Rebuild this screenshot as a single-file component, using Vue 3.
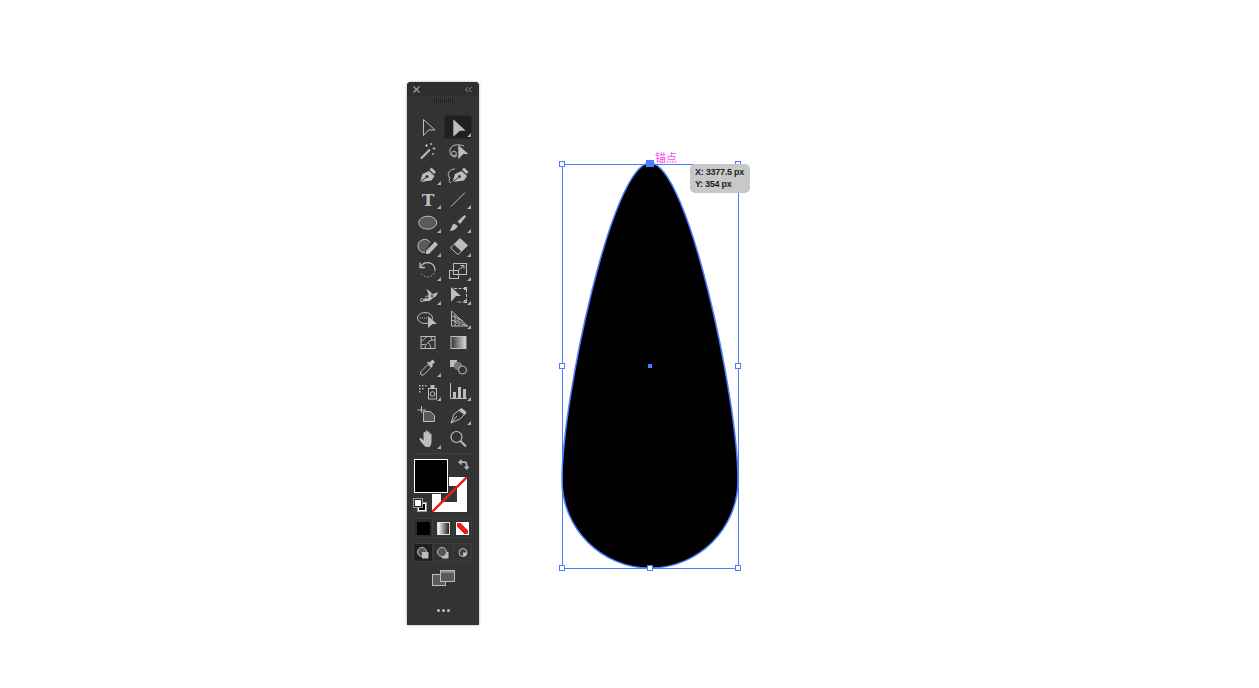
<template>
  <div class="page">
    <!-- tool panel -->
    <div class="panel">
      <div class="panel-head">
        <svg class="head-icon" width="7" height="7" viewBox="0 0 7 7"><path d="M.5 .5l6 6M6.500 .5l-6 6" stroke="#a0a0a0" stroke-width="1.200" /></svg>
        <svg class="head-icon" width="7" height="5" viewBox="0 0 7 5"><path d="M3 0L.5 2.500 3 5M6.500 0L4 2.500 6.500 5" stroke="#8f8f8f" fill="none" /></svg>
      </div>
      <div class="grip"></div>
      <div class="tools">
        <div
          v-for="tool in tools"
          :key="tool.name"
          class="tool"
          :class="{ active: tool.active, more: tool.more }"
          :title="tool.name"
        >
          <svg width="30" height="24" viewBox="0 0 30 24" fill="none" stroke="#bdbdbd" stroke-width="1" v-html="tool.icon"></svg>
        </div>
      </div>

      <div class="divider"></div>

      <!-- fill and stroke -->
      <div class="colors">
        <div class="stroke-swatch">
          <div class="stroke-hole"></div>
          <svg class="slash" width="35" height="35" viewBox="0 0 35 35"><path d="M0 35L35 0" stroke="#f01a1a" stroke-width="2.500" /></svg>
        </div>
        <div class="fill-swatch"></div>
        <svg class="swap" width="11" height="11" viewBox="0 0 14 14" fill="none" stroke="#b5b5b5" stroke-width="2">
          <path d="M2 4h6a3 3 0 0 1 3 3v5" />
          <path d="M4.500 1L1.500 4l3 3" />
          <path d="M8.500 9.500l2.500 3 2.500-3" />
        </svg>
        <div class="mini">
          <div class="mini-stroke"></div>
          <div class="mini-fill"></div>
        </div>
      </div>

      <div class="seg modes">
        <div class="seg-item first"><span class="mode black"></span></div>
        <div class="seg-item"><span class="mode gradient"></span></div>
        <div class="seg-item"><span class="mode none"></span></div>
      </div>

      <div class="seg draw-modes">
        <div class="seg-item current">
          <svg width="14" height="14" viewBox="0 0 14 14"><circle cx="6" cy="6" r="4.500" fill="#555" stroke="#bdbdbd" /><rect x="6" y="6" width="6.500" height="6.500" fill="#bdbdbd" /></svg>
        </div>
        <div class="seg-item">
          <svg width="14" height="14" viewBox="0 0 14 14"><rect x="6" y="6" width="6.500" height="6.500" fill="#bdbdbd" /><circle cx="6" cy="6" r="4.500" fill="#555" stroke="#bdbdbd" /></svg>
        </div>
        <div class="seg-item">
          <svg width="14" height="14" viewBox="0 0 14 14"><circle cx="7" cy="6.500" r="4" fill="#444" stroke="#bdbdbd" /><path d="M7 6.500h4a4 4 0 0 1-4 4z" fill="#bdbdbd" /></svg>
        </div>
      </div>

      <svg class="screen" width="23" height="17" viewBox="0 0 23 17">
        <rect x=".5" y="4.500" width="13" height="11" fill="#5a5a5a" stroke="#bdbdbd" />
        <rect x="8.500" y=".5" width="14" height="11" fill="#5a5a5a" stroke="#bdbdbd" />
        <path d="M9 2h13" stroke="#bdbdbd" />
      </svg>

      <div class="dots"><span></span><span></span><span></span></div>
    </div>

    <!-- artwork on the canvas -->
    <svg class="art" width="1259" height="688" viewBox="0 0 1259 688">
      <path
        d="M650 163C612 163 562 400 562 480C562 528.600 601.400 568 650 568C698.600 568 738 528.600 738 480C738 400 688 163 650 163Z"
        fill="#000"
        stroke="#4a7dff"
        stroke-width="1.500"
      />
      <rect x="562.500" y="164.500" width="176" height="404" fill="none" stroke="#4a7dff" />
      <rect
        v-for="h in handles"
        :key="h.x + '-' + h.y"
        :x="h.x - 2.5"
        :y="h.y - 2.5"
        width="5"
        height="5"
        fill="#fff"
        stroke="#4a7dff"
      />
      <rect x="646" y="160" width="8" height="7" fill="#4a7dff" />
      <rect x="648" y="364" width="4" height="4" fill="#4a7dff" />
    </svg>

    <span class="anchor-label">锚点</span>
    <div class="coords">
      <div>X: 3377.5 px</div>
      <div>Y: 354 px</div>
    </div>
  </div>
</template>

<script setup>
// handles of the bounding box
const handles = [
  { x: 562, y: 164 },
  { x: 738, y: 164 },
  { x: 562, y: 366 },
  { x: 738, y: 366 },
  { x: 562, y: 568 },
  { x: 650, y: 568 },
  { x: 738, y: 568 }
]

const solid = 'fill="#bdbdbd" stroke="none"'

const tools = [
  { name: 'direct', icon: '<path d="M10.500 4.500L22 15h-6.500l-5 5.500z"/>' },
  { name: 'select', active: true, more: true, icon: `<path d="M10.300 4.300L22.700 15.700H17L10.300 21.700z" ${solid}/>` },
  { name: 'wand', icon: `<path d="M8 19.500L17 10.500" stroke-width="2"/><path d="M13.500 5v3M12 6.500h3M21 8v3M19.500 9.500h3M18 4v2M17 5h2M20 14v2M19 15h2" stroke-width=".9"/>` },
  { name: 'lasso', icon: `<path d="M12 18C8 18 6.500 14 7 11 8 6 14 4.500 21 7"/><circle cx="11" cy="14.500" r="2.300"/><path d="M13 15.500c1 1 1 2-1 2.500"/><path d="M15.300 6L25.300 15h-5l-5 5.300z" ${solid}/>` },
  { name: 'pen', more: true, icon: `<path d="M7 19L9.500 11 16 8l5.500 5-3 4.500z" ${solid}/><path d="M16.500 6.500L18.500 4.500 23 9 21 11z" ${solid}/><path d="M7 19l6-4.500" stroke="#333"/><circle cx="14" cy="13.500" r="1.500" fill="#333" stroke="none"/>` },
  { name: 'curvature', icon: `<path d="M9.500 19L12 11 18.500 8l5.500 5-3 4.500z" ${solid}/><path d="M19 6.500L21 4.500 25.500 9 23.500 11z" ${solid}/><path d="M9.500 19l6-4.500" stroke="#333"/><circle cx="16.500" cy="13.500" r="1.500" fill="#333" stroke="none"/><path d="M12 6C6 6 4 11 6 14 8 17 4 18 8 20"/>` },
  { name: 'type', more: true, icon: '<text x="15" y="18.500" text-anchor="middle" font-family="DejaVu Serif, serif" font-size="17" font-weight="700" fill="#bdbdbd" stroke="none">T</text>' },
  { name: 'line', more: true, icon: '<path d="M8 19.500L22 5.500"/>' },
  { name: 'ellipse', more: true, icon: '<ellipse cx="14.700" cy="11.700" rx="9" ry="6.500" fill="#5a5a5a"/>' },
  { name: 'brush', more: true, icon: `<path d="M14.500 10.500L21.500 4l1.500 1.500-6 7.500z" ${solid}/><path d="M7 20c1-1 1-5 4-7.500l4 2.500c-1.500 3-5 5-8 5z" ${solid}/>` },
  { name: 'shaper', more: true, icon: `<path d="M12 17.500a6.500 6.500 0 1 1 5-10" fill="#5a5a5a"/><path d="M13 19l0-3L22 6.500l3 3L16 19z" ${solid}/>` },
  { name: 'eraser', more: true, icon: `<path d="M7.500 13L17 3.500l7.500 7L15 19.500z"/><path d="M11 9.500L17 3.500l7.500 7-6 6z" ${solid}/>` },
  { name: 'rotate', more: true, icon: `<path d="M8 7.500A7.500 7.500 0 0 1 22 11" stroke-width="1.300"/><path d="M22 11a7.500 7.500 0 0 1-14.500 2" stroke-dasharray="1.500 1.800"/><path d="M7 3.500v5h5" stroke-width="1.300"/>` },
  { name: 'scale', more: true, icon: `<rect x="10.500" y="4.500" width="13" height="11"/><rect x="6.500" y="11.500" width="9" height="8"/><path d="M15.500 11L21 6.500M17.500 6.500H21V10"/>` },
  { name: 'warp', more: true, icon: `<path d="M7 19c2-3 6-3 8-6 1-2 0-4-2-7 3 1 5 3 6 5 2 0 4-1 6-2-1 3-2 5-5 6-2 1-2 3-5 3-2 0-4 0-8 1z" ${solid}/><circle cx="9" cy="17" r="1.500" stroke-width=".8" fill="#333"/><circle cx="14" cy="14.500" r="1.500" stroke-width=".8" fill="#333"/><circle cx="19" cy="13" r="1.500" stroke-width=".8" fill="#333"/>` },
  { name: 'free transform', more: true, icon: `<path d="M8 4l10 9h-5l-5 6z" ${solid}/><path d="M11 5.500h12.500V19H13" stroke-dasharray="3 1.500"/><rect x="21.500" y="4.500" width="2" height="2"/><rect x="21.500" y="17.500" width="2" height="2"/>` },
  { name: 'shape builder', icon: `<ellipse cx="12" cy="11" rx="7.500" ry="5.500"/><path d="M7 11h9" stroke-dasharray="1 1"/><path d="M15 9l9 8h-4.500L15 21z" ${solid}/>` },
  { name: 'perspective grid', more: true, icon: `<path d="M8.500 4v15h16M8.500 4l16 15M8.500 8.500l11 5M8.500 13l16 6M12 7.500V19M16 11.500V19"/><path d="M13 12l6 3 2 2H13z" fill="#777" stroke="none"/>` },
  { name: 'mesh', icon: '<rect x="8" y="5.500" width="14" height="12"/><path d="M8 10c4-1 4-4 7-5M12 17.500c0-4 2-4 3-6s4-2 7-3M8 14c3-1 4 0 5-1M15 11.500c2 1 2 3 3 6M18 5.500c0 2 1 3 1 4"/>' },
  { name: 'gradient', icon: '<rect x="8" y="5.500" width="15" height="12" fill="url(#tool-grad)"/><defs><linearGradient id="tool-grad"><stop offset="0" stop-color="#333"/><stop offset="1" stop-color="#ddd"/></linearGradient></defs>' },
  { name: 'eyedropper', more: true, icon: `<path d="M8 20l-.5-3L15 9.500l3 3L10.500 20z"/><path d="M14 7.500l1.500-1 1 1 3-3 2.500 2.500-3 3 1 1-1.500 1.500z" ${solid}/>` },
  { name: 'blend', icon: `<rect x="7" y="5" width="7" height="7" ${solid}/><circle cx="15" cy="11" r="4" fill="#777" stroke="none"/><circle cx="19.500" cy="15" r="4" fill="#333"/>` },
  { name: 'symbol sprayer', more: true, icon: `<path d="M6 6h1.500v1.500H6zM9 6h1.500v1.500H9zM12 6h1.500v1.500H12zM6 9h1.500v1.500H6zM9 9h1.500v1.500H9zM6 12h1.500v1.500H6z" ${solid}/><rect x="15.500" y="9.500" width="8" height="10.500"/><rect x="17.500" y="6" width="4" height="3.500" fill="#bdbdbd" stroke="none"/><circle cx="19.500" cy="15" r="2.300"/>` },
  { name: 'graph', more: true, icon: `<path d="M7.500 4v15.500H24"/><path d="M10 13h3v6h-3zM15 8h3v11h-3zM20 10h3v9h-3z" ${solid}/>` },
  { name: 'artboard', icon: `<path d="M8.500 3v7M4.500 7h8.500"/><path d="M10.500 8.500h7l4 4v6h-11z" fill="#5a5a5a"/>` },
  { name: 'slice', more: true, icon: `<path d="M8 20l3-9 7-5 5 4-6 6z"/><path d="M15.500 7.500l3-2.500 5 4-2 3z" ${solid}/><path d="M8 20l6-7"/>` },
  { name: 'hand', more: true, icon: `<path d="M13 20c-2-1-5-5-6.500-7.500-.5-1.500 1-2 2-1l2 2V6c0-1.500 2-1.500 2 0v3-4.500c0-1.500 2-1.500 2 0V9 5.500c0-1.500 2-1.500 2 0V10 7.500c0-1.500 2-1.500 2 0V15c0 2-1 4-2 5z" ${solid}/>` },
  { name: 'zoom', icon: '<circle cx="13.500" cy="10" r="5.500" stroke-width="1.200"/><path d="M17.500 14l5.500 5.500" stroke-width="2"/>' }
]
</script>

<style>
html,
body {
  margin: 0;
  background: #fff;
}
</style>

<style scoped>
.page {
  position: relative;
  width: 1259px;
  height: 688px;
  overflow: hidden;
  background: #fff;
  font-family: "Liberation Sans", Arial, sans-serif;
}
.panel {
  position: absolute;
  left: 407px;
  top: 82px;
  width: 72px;
  height: 543px;
  box-sizing: border-box;
  display: flex;
  flex-direction: column;
  align-items: center;
  background: #333;
  border-radius: 4px 4px 0 0;
  box-shadow: 0 0 3px rgba(0, 0, 0, 0.35);
}
.panel-head {
  align-self: stretch;
  height: 14px;
  padding: 0 7px 0 6px;
  display: flex;
  align-items: center;
  justify-content: space-between;
  background: #2e2e2e;
  border-radius: 4px 4px 0 0;
}
.head-icon {
  display: block;
}
.grip {
  width: 19px;
  height: 4px;
  margin-top: 3px;
  background: repeating-linear-gradient(90deg, #1f1f1f 0 1px, #3c3c3c 1px 2px);
}
.tools {
  display: grid;
  grid-template-columns: 30px 30px;
  grid-auto-rows: 24px;
  margin-top: 12px;
}
.tool {
  position: relative;
  width: 30px;
  height: 24px;
}
.tool svg {
  position: relative;
  display: block;
}
.tool.active::before {
  content: "";
  position: absolute;
  inset: 0 1px;
  background: #1f1f1f;
  border: 1px solid #2a2a2a;
  border-radius: 3px;
}
.tool.more::after {
  content: "";
  position: absolute;
  right: 2px;
  bottom: 2px;
  border-style: solid;
  border-width: 0 0 4px 4px;
  border-color: transparent transparent #b0b0b0 transparent;
}
.divider {
  width: 58px;
  height: 1px;
  margin-top: 2px;
  background: #3f3f3f;
}
.colors {
  position: relative;
  width: 58px;
  height: 59px;
  margin-top: 5px;
}
.fill-swatch {
  position: absolute;
  left: 0;
  top: 0;
  width: 32px;
  height: 32px;
  background: #000;
  border: 1px solid #fff;
  box-shadow: 0 0 0 1px #333;
}
.stroke-swatch {
  position: absolute;
  left: 18px;
  top: 18px;
  width: 35px;
  height: 35px;
  background: #fff;
}
.stroke-hole {
  position: absolute;
  left: 9px;
  top: 9px;
  width: 16px;
  height: 16px;
  background: #333;
}
.slash {
  position: absolute;
  left: 0;
  top: 0;
}
.swap {
  position: absolute;
  left: 44px;
  top: 0;
}
.mini {
  position: absolute;
  left: 0;
  top: 40px;
  width: 12px;
  height: 12px;
}
.mini-stroke {
  position: absolute;
  left: 4px;
  top: 4px;
  width: 6px;
  height: 6px;
  background: #000;
  border: 1px solid #fff;
  box-shadow: 0 0 0 1px #999;
}
.mini-fill {
  position: absolute;
  left: 0;
  top: 0;
  width: 6px;
  height: 6px;
  background: #fff;
  border: 1px solid #222;
  box-shadow: 0 0 0 1px #999;
}
.seg {
  align-self: flex-start;
  margin-left: 6px;
  width: 59px;
  height: 19px;
  box-sizing: border-box;
  display: grid;
  grid-template-columns: 18px 21px 18px;
  border: 1px solid #3d3d3d;
  border-radius: 3px;
}
.seg-item {
  display: flex;
  align-items: center;
  justify-content: center;
  min-width: 0;
}
.seg-item + .seg-item {
  border-left: 1px solid #3d3d3d;
}
.seg-item svg {
  display: block;
}
.modes {
  height: 20px;
}
.first {
  background: #2c2c2c;
  border-radius: 3px 0 0 3px;
}
.draw-modes {
  margin-top: 5px;
}
.current {
  background: #1f1f1f;
  border-radius: 3px 0 0 3px;
}
.mode {
  display: block;
  width: 13px;
  height: 13px;
  box-sizing: border-box;
}
.mode.black {
  background: #000;
}
.mode.gradient {
  background: linear-gradient(90deg, #fff, #222);
  border: 1px solid #ddd;
}
.mode.none {
  background: linear-gradient(135deg, #fff 0 36%, #f01a1a 36% 64%, #fff 64%);
  transform: scaleX(-1);
  border: 1px solid #fff;
}
.screen {
  display: block;
  margin-top: 8px;
}
.dots {
  display: flex;
  gap: 2px;
  margin-top: 22px;
}
.dots span {
  width: 3px;
  height: 3px;
  border-radius: 50%;
  background: #bdbdbd;
}
.art {
  position: absolute;
  left: 0;
  top: 0;
}
.anchor-label {
  position: absolute;
  left: 655px;
  top: 150px;
  font-family: "Noto Sans CJK SC", sans-serif;
  font-size: 11px;
  line-height: 14px;
  color: #ff4df0;
}
.coords {
  position: absolute;
  left: 690px;
  top: 164px;
  width: 60px;
  height: 29px;
  box-sizing: border-box;
  padding: 2px 0 0 5px;
  background: #c8c8c8;
  border-radius: 5px;
  font-size: 9px;
  line-height: 12px;
  font-weight: 700;
  letter-spacing: -0.25px;
  color: #222;
  white-space: nowrap;
}
</style>
